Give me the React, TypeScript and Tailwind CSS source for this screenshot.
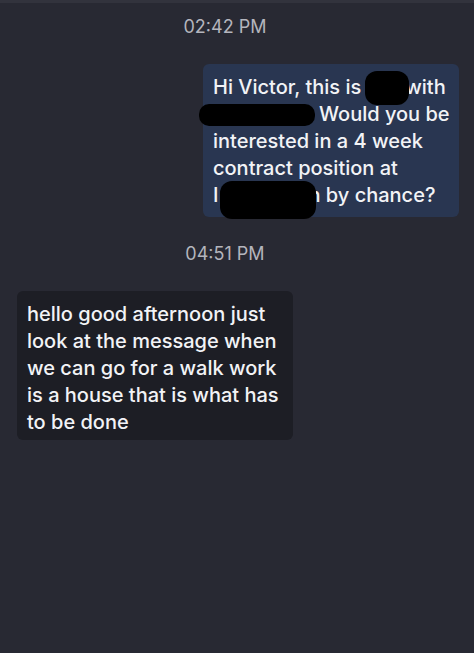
export default function App() {
  const font = { fontFamily: 'Inter, "Liberation Sans", sans-serif' };

  return (
    <div className="w-[474px] h-[653px] bg-[#282933] border-t-[3px] border-[#32333d] overflow-hidden" style={font}>
      <div className="w-[450px] pt-[13px] text-center text-[18px] leading-[22px] text-[#b4b5bd]">02:42 PM</div>

      <div className="flex justify-end pr-[15px] mt-[26px]">
        <div className="w-[256px] h-[153px] bg-[#293651] rounded-[6px] pl-[10px] pt-[10px] text-[20px] font-medium leading-[27px] text-[#f2f3f6]">
          <div className="flex items-center">
            <span>Hi Victor, this is</span>
            <span className="relative z-10 inline-block w-[44px] h-[34px] -my-[8px] mt-[-8px] bg-black rounded-[12px] ml-[4px] -mr-[4px]" />
            <span>with</span>
          </div>
          <div className="flex items-center">
            <span className="inline-block w-[116px] h-[22px] -my-[2px] -ml-[14px] bg-black rounded-[10px] mr-[4px]" />
            <span>Would you be</span>
          </div>
          <div>interested in a 4 week</div>
          <div>contract position at</div>
          <div className="flex items-start">
            <span>I</span>
            <span className="relative z-10 inline-block w-[96px] h-[38px] -mb-[11px] mt-[-1px] bg-black rounded-[12px] ml-[2px] -mr-[8px]" />
            <span>n by chance?</span>
          </div>
        </div>
      </div>

      <div className="w-[450px] mt-[26px] text-center text-[18px] leading-[22px] text-[#b4b5bd]">04:51 PM</div>

      <div className="pl-[17px] mt-[26px]">
        <div className="w-[276px] h-[149px] bg-[#1d1e25] rounded-[6px] pl-[10px] pt-[10px] text-[20px] font-medium leading-[27px] text-[#f2f3f6]">
          <div>hello good afternoon just</div>
          <div>look at the message when</div>
          <div>we can go for a walk work</div>
          <div>is a house that is what has</div>
          <div>to be done</div>
        </div>
      </div>
    </div>
  );
}
